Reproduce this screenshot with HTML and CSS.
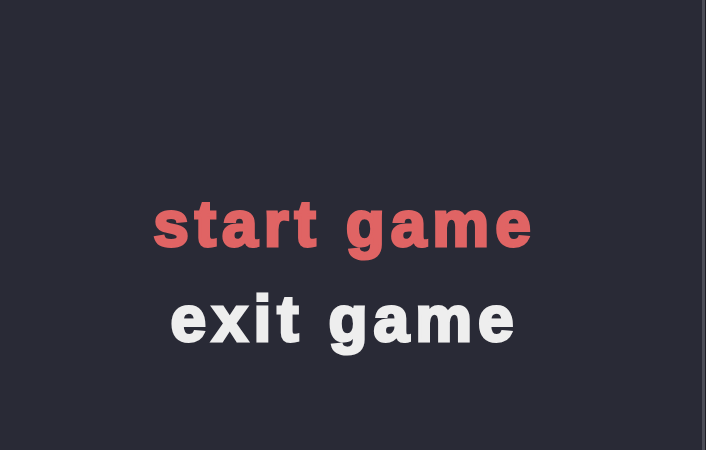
FILE: index.html
```html
<!DOCTYPE html>
<html lang="en">
<head>
    <meta charset="UTF-8">
    <meta name="viewport" content="width=device-width, initial-scale=1.0">
    <title>Main Menu</title>
    <link rel="stylesheet" href="styles.css">
</head>
<body>
    <div class="screen">
        <div class="menu">
            <button class="menu-item active" id="startBtn">start game</button>
            <button class="menu-item" id="exitBtn">exit game</button>
        </div>
    </div>
</body>
</html>
```

FILE: styles.css
```css
html, body {
    margin: 0;
    height: 100%;
    background-color: #1e1e26;
}

.screen {
    box-sizing: border-box;
    width: 705px;
    height: 100%;
    background-color: #292a36;
    border-right: 3px solid #4b4c56;
    display: flex;
    justify-content: center;
    padding-right: 12px;
}

.menu {
    display: flex;
    flex-direction: column;
    align-items: center;
    padding-top: 177px;
}

.menu-item {
    background: none;
    border: none;
    padding: 0;
    cursor: pointer;
    font-family: "Liberation Sans", Arial, sans-serif;
    font-weight: bold;
    font-size: 64px;
    line-height: 95px;
    letter-spacing: 6px;
    color: #eeeeee;
    -webkit-text-stroke: 3px #eeeeee;
}

.menu-item.active {
    color: #e06464;
    -webkit-text-stroke-color: #e06464;
}
```
